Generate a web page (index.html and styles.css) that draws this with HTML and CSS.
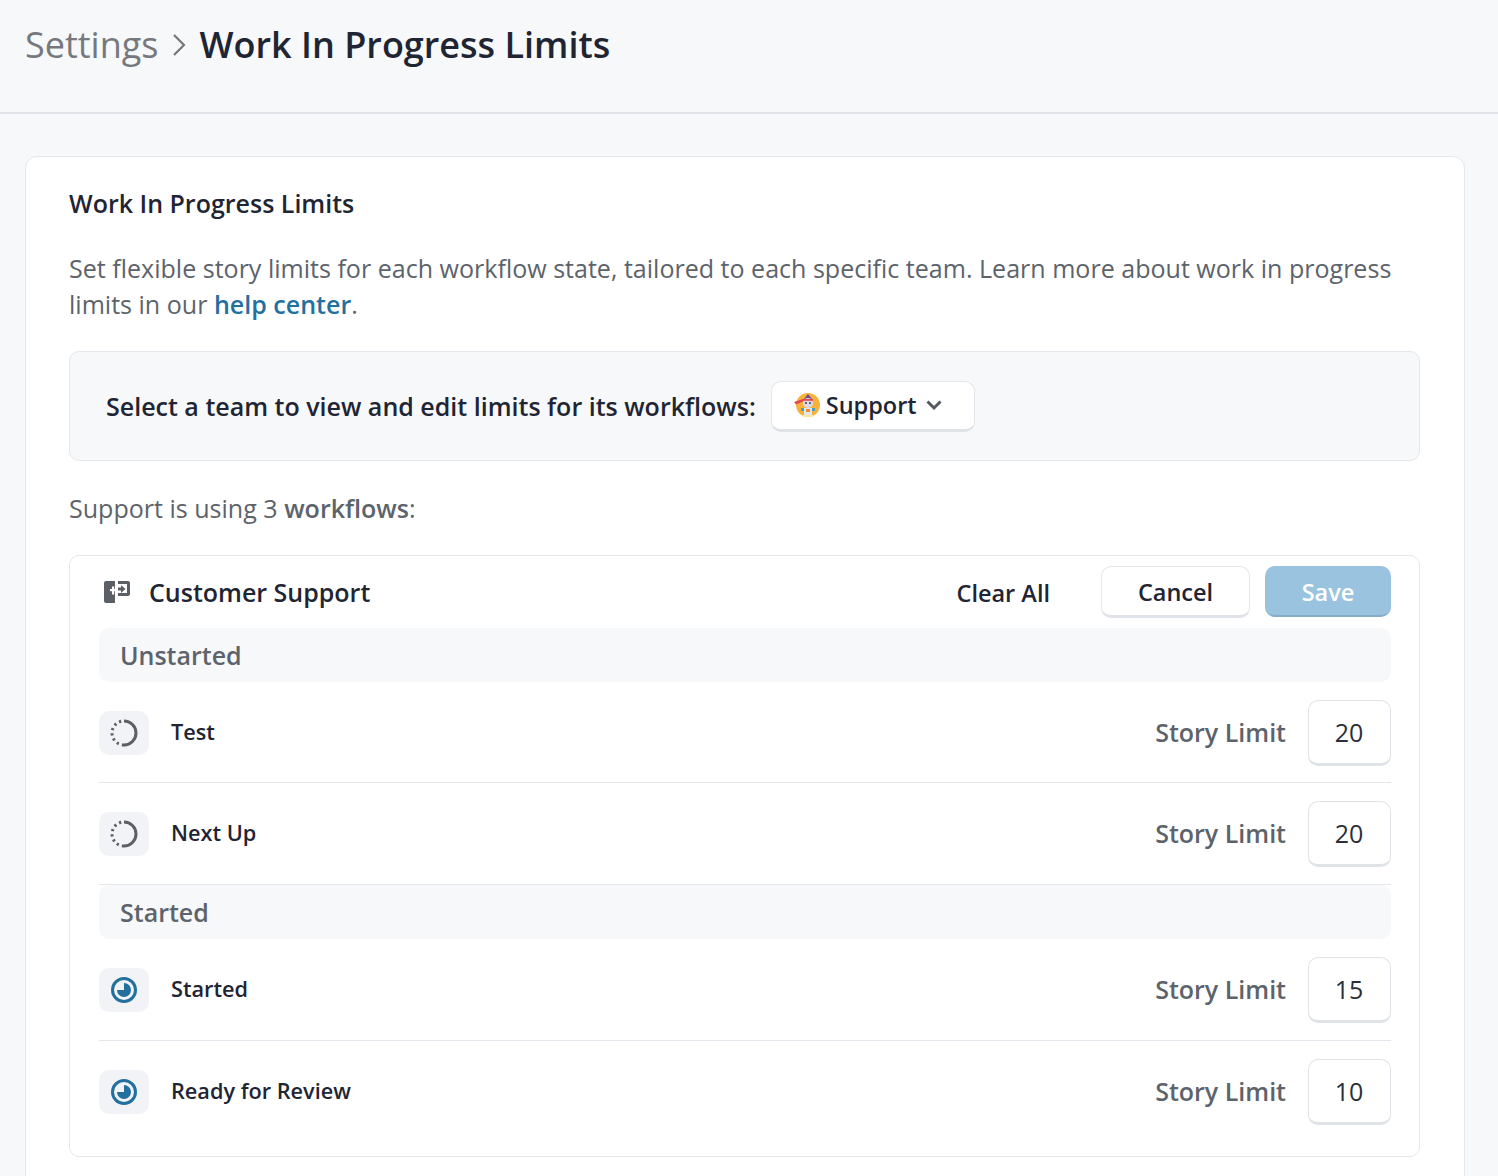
FILE: index.html
```html
<!DOCTYPE html>
<html lang="en">
<head>
<meta charset="utf-8">
<title>Work In Progress Limits</title>
<link rel="stylesheet" href="styles.css">
</head>
<body>
<header class="topbar">
  <span class="crumb">Settings</span>
  <svg class="crumb-sep" width="16" height="24" viewBox="0 0 16 24"><path d="M3 2l10 10L3 22" fill="none" stroke="#74787d" stroke-width="2.200"/></svg>
  <h1 class="page-title">Work In Progress Limits</h1>
</header>
<main class="content">
  <section class="card">
    <h2 class="card-title">Work In Progress Limits</h2>
    <p class="intro">Set flexible story limits for each workflow state, tailored to each specific team. Learn more about work in progress limits in our <a class="link" href="#">help center</a>.</p>
    <div class="team-box">
      <span class="team-label">Select a team to view and edit limits for its workflows:</span>
      <button class="team-select">
        <svg class="avatar" width="28" height="28" viewBox="0 0 28 28">
          <circle cx="15" cy="14" r="12" fill="#f7b23b"/>
          <path d="M8 24a12 12 0 0 0 14 0z" fill="#fde3a0"/>
          <path d="M11 8l4-5 4 5z" fill="#6d4c8e"/>
          <circle cx="15" cy="12" r="5" fill="#dcd9e6"/>
          <path d="M1 11l9-3 0 2.500-7 3z" fill="#e8464f"/>
          <path d="M9 8h11v1.800h-11z" fill="#e8464f"/>
          <path d="M11 17h8v7h-8z" fill="#dfe8ef"/>
          <path d="M8 17h3v3H8zM19 17h3v3h-3z" fill="#4a9cc4"/>
          <path d="M13 18h4v3h-4z" fill="#f08a24"/>
          <circle cx="13" cy="12" r=".9" fill="#333"/><circle cx="17" cy="12" r=".9" fill="#333"/>
        </svg>
        <span>Support</span>
        <svg class="chevron" width="18" height="12" viewBox="0 0 18 12"><path d="M2.500 2.500L9 9l6.500-6.500" fill="none" stroke="#55595f" stroke-width="3"/></svg>
      </button>
    </div>
    <p class="usage">Support is using 3 <strong class="usage-strong">workflows</strong>:</p>
    <div class="workflow">
      <div class="workflow-head">
        <svg class="wf-icon" width="28" height="24" viewBox="0 0 28 24">
          <path d="M3 1h9v22H3a2 2 0 0 1-2-2V3a2 2 0 0 1 2-2z" fill="#5b5f66"/>
          <path d="M7 9h7v2.200H7z" fill="#fff"/>
          <path d="M9 6.500h2.200v8H9z" fill="#fff"/>
          <path d="M15 1h10a2 2 0 0 1 2 2v11a2 2 0 0 1-2 2H15v-3h9V4h-9z" fill="#5b5f66"/>
          <path d="M15 7.500h3V5l4.500 4-4.500 4v-2.500h-3z" fill="#5b5f66"/>
        </svg>
        <span class="wf-name">Customer Support</span>
        <span class="clear">Clear All</span>
        <button class="btn btn-cancel">Cancel</button>
        <button class="btn btn-save">Save</button>
      </div>

      <div class="band">Unstarted</div>
      <div class="row row-tight">
        <span class="state-icon"><svg width="28" height="28" viewBox="0 0 28 28"><use href="#unstarted"/></svg></span>
        <span class="state-name">Test</span>
        <span class="limit-label">Story Limit</span>
        <span class="limit-input">20</span>
      </div>
      <div class="row">
        <span class="state-icon"><svg width="28" height="28" viewBox="0 0 28 28"><use href="#unstarted"/></svg></span>
        <span class="state-name">Next Up</span>
        <span class="limit-label">Story Limit</span>
        <span class="limit-input">20</span>
      </div>

      <div class="band band-top">Started</div>
      <div class="row">
        <span class="state-icon"><svg width="28" height="28" viewBox="0 0 28 28"><use href="#started"/></svg></span>
        <span class="state-name">Started</span>
        <span class="limit-label">Story Limit</span>
        <span class="limit-input">15</span>
      </div>
      <div class="row row-last">
        <span class="state-icon"><svg width="28" height="28" viewBox="0 0 28 28"><use href="#started"/></svg></span>
        <span class="state-name">Ready for Review</span>
        <span class="limit-label">Story Limit</span>
        <span class="limit-input">10</span>
      </div>
    </div>
  </section>
</main>
<svg class="defs" width="0" height="0">
  <defs>
    <g id="unstarted">
      <path d="M14 2a12 12 0 0 1 0 24" fill="none" stroke="#5b5f66" stroke-width="3"/>
      <path d="M14 26A12 12 0 0 1 14 2" fill="none" stroke="#5b5f66" stroke-width="3" stroke-dasharray="2.200 3.200"/>
    </g>
    <g id="started">
      <circle cx="14" cy="14" r="11.500" fill="none" stroke="#23709f" stroke-width="3"/>
      <path d="M14 7a7 7 0 1 1-7 7h7z" fill="#23709f"/>
    </g>
  </defs>
</svg>
</body>
</html>
```

FILE: styles.css
```css
* { box-sizing: border-box; }
html, body { margin: 0; height: 100%; overflow: hidden; }
body {
  background: #f7f8fa;
  color: #1f2533;
  font-family: "Open Sans", "Noto Sans", sans-serif;
}
.topbar {
  height: 114px;
  border-bottom: 2px solid #dfe2e6;
  padding: 20px 25px 0;
  display: flex;
  align-items: flex-start;
}
.crumb { font-size: 36px; line-height: 50px; color: #75797e; }
.crumb-sep { margin: 13px 13px 0 12px; }
.page-title { margin: 0; font-size: 36px; line-height: 50px; font-weight: 600; color: #1f2533; }
.content { padding: 42px 33px 0 25px; }
.card {
  background: #fff;
  border: 1px solid #e3e8ec;
  border-radius: 12px;
  padding: 29px 44px 40px 43px;
}
.card-title { margin: 0; font-size: 25px; line-height: 35px; font-weight: 600; color: #1f2533; }
.intro { margin: 29px 0 0; font-size: 25.060px; line-height: 36px; color: #5d636b; }
.link { color: #23709f; font-weight: 600; text-decoration: none; }
.team-box {
  margin-top: 29px;
  height: 110px;
  background: #f7f8fa;
  border: 1px solid #e3e6ea;
  border-radius: 10px;
  padding: 0 36px;
  display: flex;
  align-items: center;
}
.team-label { font-size: 25.030px; font-weight: 600; color: #1f2533; white-space: nowrap; }
.team-select {
  margin-left: 15px;
  width: 204px;
  height: 51px;
  background: #fff;
  border: 1px solid #e3e6ea;
  border-bottom: 3px solid #dfe2e6;
  border-radius: 10px;
  padding: 0 0 0 21px;
  display: flex;
  align-items: center;
  font: 600 23.500px "Open Sans", sans-serif;
  color: #1f2533;
}
.avatar { margin-right: 5px; flex: none; }
.chevron { margin-left: 8px; }
.usage { margin: 29px 0 0; font-size: 25.060px; line-height: 36px; color: #5d636b; }
.usage-strong { font-weight: 600; }
.workflow {
  margin-top: 29px;
  border: 1px solid #e3e8ec;
  border-radius: 10px;
  padding: 10px 28px 14px 29px;
}
.workflow-head { display: flex; align-items: center; height: 52px; }
.wf-icon { margin-left: 4px; flex: none; }
.wf-name { margin-left: 18px; font-size: 25px; font-weight: 600; color: #1f2533; }
.clear { margin: 1px 51px 0 auto; font-size: 23.500px; font-weight: 600; color: #1f2533; }
.btn {
  height: 52px;
  border-radius: 10px;
  font: 600 23.500px "Open Sans", sans-serif;
  padding: 2px 0 0;
}
.btn-cancel {
  width: 149px;
  background: #fff;
  color: #1f2533;
  border: 1px solid #e3e6ea;
  border-bottom: 3px solid #dfe2e6;
}
.btn-save {
  margin-left: 15px;
  width: 126px;
  height: 51px;
  align-self: flex-start;
  background: #99c3df;
  color: #fff;
  border: 0;
  border-bottom: 2px solid #86aecb;
}
.band {
  margin-top: 10px;
  height: 54px;
  background: #f7f8fa;
  border-radius: 10px;
  padding-left: 21px;
  font-size: 25px;
  font-weight: 600;
  line-height: 54px;
  color: #5d636b;
}
.band-top { margin-top: 0; }
.row {
  display: flex;
  align-items: center;
  padding: 18px 0 17px;
  border-bottom: 1px solid #e3e6ea;
}
.row-tight { padding-bottom: 16px; }
.row-last { border-bottom: 0; }
.state-icon {
  width: 50px;
  height: 44px;
  border-radius: 10px;
  background: #f1f3f7;
  display: flex;
  align-items: center;
  justify-content: center;
}
.state-name { margin-left: 22px; margin-top: -3px; font-size: 21.700px; font-weight: 600; color: #1f2533; }
.limit-label { margin: -2px 0 0 auto; font-size: 25px; font-weight: 600; color: #5d636b; }
.limit-input {
  margin-left: 22px;
  width: 83px;
  height: 66px;
  padding-right: 1px;
  border: 1px solid #e0e3e7;
  border-bottom: 3px solid #dfe2e6;
  border-radius: 10px;
  display: flex;
  align-items: center;
  justify-content: center;
  font-size: 25px;
  color: #2a2f38;
}
.defs { position: absolute; }
```
